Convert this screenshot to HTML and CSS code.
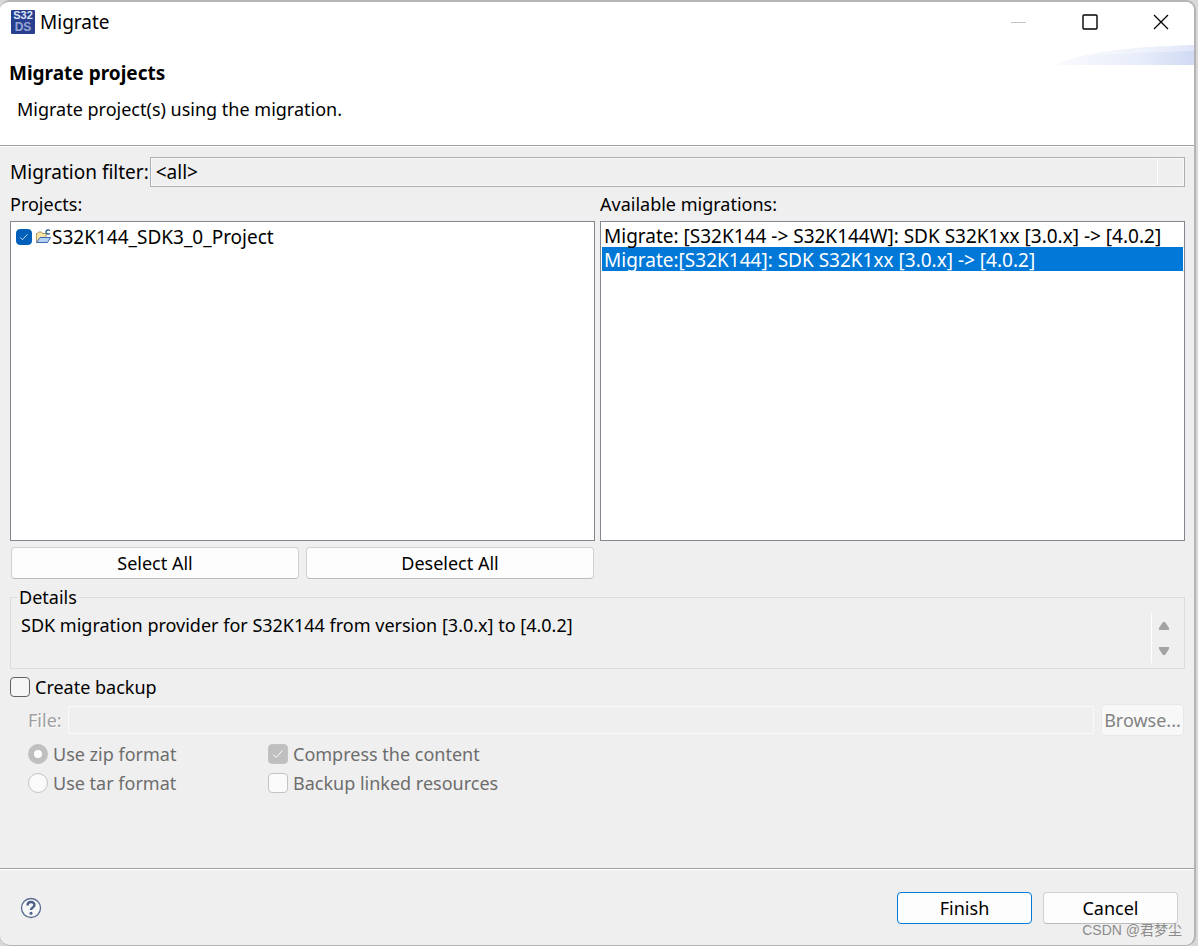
FILE: index.html
```html
<!doctype html>
<html lang="en">
<head>
	<meta charset="UTF-8">
	<meta name="viewport" content="width=device-width, initial-scale=1.0">
	<title>Migrate</title>
	<link rel="stylesheet" href="styles.css">
</head>
<body>
	<div class="window">
		<header class="header">
			<div class="titlebar">
				<svg class="logo" viewBox="0 0 24 24">
					<rect width="24" height="24" rx="1" fill="#283f8f"/>
					<text x="12" y="9" fill="#dfe5f7" text-anchor="middle">S32</text>
					<text class="ds" x="12" y="21" fill="#97a6d6" text-anchor="middle">DS</text>
				</svg>
				<span class="title">Migrate</span>
				<button class="win-btn" type="button" aria-label="Minimize" disabled>
					<svg viewBox="0 0 16 16"><path d="M0 8.5h15" stroke="#c4c4c4"/></svg>
				</button>
				<button class="win-btn" type="button" aria-label="Maximize">
					<svg viewBox="0 0 16 16"><rect x="1" y="1" width="14" height="14" rx="1" fill="none" stroke="#000" stroke-width="1.4"/></svg>
				</button>
				<button class="win-btn" type="button" aria-label="Close">
					<svg viewBox="0 0 16 16"><path d="M1 1l14 14M15 1L1 15" stroke="#000" stroke-width="1.3"/></svg>
				</button>
			</div>
			<div class="banner">
				<div>
					<h1>Migrate projects</h1>
					<p>Migrate project(s) using the migration.</p>
				</div>
				<svg class="swoosh" viewBox="0 0 140 20">
					<defs>
						<linearGradient id="swoosh">
							<stop offset="0" stop-color="#fafbfe"/>
							<stop offset=".6" stop-color="#e8edfa"/>
							<stop offset="1" stop-color="#d0daf4"/>
						</linearGradient>
					</defs>
					<path d="M0 20C25 8 75 2 140 0v20z" fill="url(#swoosh)"/>
					<path d="M30 11C60 5 100 1 140 0v6C100 7 60 9 30 11z" fill="#fff" opacity=".35"/>
				</svg>
			</div>
		</header>

		<main class="content">
			<div class="filter">
				<label for="filter">Migration filter:</label>
				<div class="combo">
					<select id="filter">
						<option>&lt;all&gt;</option>
					</select>
				</div>
			</div>

			<div class="lists">
				<section class="list">
					<h2>Projects:</h2>
					<div class="box">
						<label class="project">
							<input class="check small" type="checkbox" checked>
							<svg class="folder" viewBox="0 0 16 16">
								<path d="M1.5 13V4.500h1l1-1.500h3l1 1.500h3.500v4" fill="#f6e3a6" stroke="#b39a5c"/>
								<path d="M1.500 13.500L5 8.500h10.500l-3 5z" fill="#b4d3f4" stroke="#3f68b0"/>
								<path d="M15 1.500c-1.500-1-4-.8-4 1.500s2.500 2.500 4 1.500" fill="none" stroke="#275b91" stroke-width="1.400"/>
							</svg>
							<span>S32K144_SDK3_0_Project</span>
						</label>
					</div>
					<div class="list-actions">
						<button class="btn" type="button">Select All</button>
						<button class="btn" type="button">Deselect All</button>
					</div>
				</section>
				<section class="list">
					<h2><label for="migrations">Available migrations:</label></h2>
					<select class="box migrations" id="migrations" size="4">
						<option>Migrate: [S32K144 -&gt; S32K144W]: SDK S32K1xx [3.0.x] -&gt; [4.0.2]</option>
						<option selected>Migrate:[S32K144]: SDK S32K1xx [3.0.x] -&gt; [4.0.2]</option>
					</select>
				</section>
			</div>

			<fieldset class="details">
				<legend>Details</legend>
				<textarea aria-label="Details" rows="2" readonly>SDK migration provider for S32K144 from version [3.0.x] to [4.0.2]</textarea>
				<div class="scroll">
					<button type="button" aria-label="Scroll up" disabled>
						<svg viewBox="0 0 10 8"><path d="M4 0h2l4 6v2H0V6z"/></svg>
					</button>
					<button type="button" aria-label="Scroll down" disabled>
						<svg viewBox="0 0 10 8"><path d="M4 8h2l4-6V0H0v2z"/></svg>
					</button>
				</div>
			</fieldset>

			<label class="option"><input class="check" type="checkbox">Create backup</label>
			<div class="backup">
				<div class="file">
					<label for="file">File:</label>
					<input id="file" type="text" disabled>
					<button class="btn" type="button" disabled>Browse...</button>
				</div>
				<div class="formats">
					<label class="option"><input class="radio" type="radio" name="format" checked disabled>Use zip format</label>
					<label class="option"><input class="check" type="checkbox" checked disabled>Compress the content</label>
					<label class="option"><input class="radio" type="radio" name="format" disabled>Use tar format</label>
					<label class="option"><input class="check" type="checkbox" disabled>Backup linked resources</label>
				</div>
			</div>
		</main>

		<footer class="footer">
			<button class="help" type="button" aria-label="Help">
				<svg viewBox="0 0 22 22">
					<circle cx="11" cy="11" r="9.500" fill="#f6f7f9" stroke="#5a6c90" stroke-width="1.300"/>
					<path d="M7.500 8.500c0-4.500 7-4.500 7-.5 0 2.500-3.500 2.500-3.500 5" fill="none" stroke="#4c6089" stroke-width="2.400"/>
					<circle cx="11" cy="16.300" r="1.500" fill="#4c6089"/>
				</svg>
			</button>
			<button class="btn primary" type="button">Finish</button>
			<button class="btn" type="button">Cancel</button>
		</footer>
		<span class="watermark">CSDN @君梦尘</span>
	</div>
</body>
</html>
```
FILE: styles.css
```css
* {
	box-sizing: border-box;
}

body {
	margin: 0;
	background-color: #d8d8d8;
	color: #000;
	font: 400 18px/24px "Noto Sans", "Open Sans", "Noto Sans CJK SC", sans-serif;
}

h1, h2, p {
	margin: 0;
	font-size: 18px;
}

h2 {
	font-weight: 400;
}

button, input, select, textarea {
	margin: 0;
	color: inherit;
	font: inherit;
}

svg {
	display: block;
}

.window {
	position: relative;
	display: flex;
	flex-direction: column;
	overflow: hidden;
	min-height: 100vh;
	margin-right: 2px;
	border: solid #b4b4b4;
	border-width: 2px 2px 1px 0;
	border-radius: 10px;
	background-color: #efefef;
}

/* title and banner */
.header {
	height: 144px;
	border-bottom: 1px solid #a0a0a0;
	background-color: #fff;
}

.titlebar {
	display: flex;
	align-items: center;
	height: 40px;
	padding-left: 11px;
}

.logo {
	overflow: visible;
	width: 24px;
	height: 24px;
	font: 700 11px "Liberation Sans", sans-serif;
}

.logo .ds {
	font-size: 12px;
}

.title {
	flex: 1;
	margin-left: 5px;
	font-size: 19px;
}

.win-btn {
	width: 71px;
	height: 40px;
	padding: 0 25px 0 30px;
	border: 0;
	background: none;
}

.win-btn svg {
	width: 16px;
	height: 16px;
}

.banner {
	display: flex;
	justify-content: space-between;
	padding-left: 9px;
}

.banner h1 {
	padding-top: 19px;
	font-size: 19px;
}

.banner p {
	padding: 12px 0 0 8px;
}

.swoosh {
	width: 140px;
	height: 20px;
	margin-top: 3px;
}

/* content */
.content {
	flex: 1;
	padding: 10px 9px 0 10px;
	border-top: 1px solid #fff;
}

.filter {
	display: flex;
	align-items: center;
	gap: 1px;
	font-size: 19px;
}

.combo {
	position: relative;
	flex: 1;
}

.combo::after {
	position: absolute;
	top: 2px;
	right: 27px;
	bottom: 2px;
	border-left: 1px solid #fff;
	content: "";
}

.combo select {
	display: block;
	width: 100%;
	height: 30px;
	padding: 0 5px;
	border: 1px solid #adadb2;
	border-radius: 0;
	box-shadow: inset 0 0 0 1px #fafafa;
	background-color: #efefef;
	appearance: none;
}

.lists {
	display: flex;
	gap: 5px;
}

.list {
	flex: 1;
	min-width: 0;
}

.list h2 {
	height: 34px;
	padding-top: 5px;
}

.box {
	display: block;
	width: 100%;
	height: 320px;
	border: 1px solid #828790;
	border-radius: 0;
	background-color: #fff;
	font-size: 19px;
}

.project {
	display: flex;
	align-items: center;
	padding: 3px 5px;
}

.folder {
	width: 16px;
	height: 16px;
	margin: 0 1px 0 3px;
}

.migrations {
	padding: 1px;
	overflow: hidden;
	outline: 0;
	appearance: none;
}

.migrations option {
	height: 24px;
	min-height: 24px;
	padding: 0 2px;
	line-height: 24px;
}

.migrations option:checked {
	background: linear-gradient(#0078d7, #0078d7);
	color: #fff;
}

.list-actions {
	display: flex;
	gap: 7px;
	padding: 6px 1px 0;
}

.list-actions .btn {
	flex: 1;
}

.btn {
	height: 32px;
	padding: 0;
	border: 1px solid #d0d0d0;
	border-bottom-color: #bcbcbc;
	border-radius: 4px;
	background-color: #fdfdfd;
}

.btn:disabled {
	border-color: #e8e8e8;
	background-color: #f8f8f8;
	color: #838383;
}

.details {
	display: flex;
	min-width: 0;
	margin: 6px 0 0;
	padding: 4px 15px 5px 10px;
	border: 1px solid #dcdcdc;
}

.details legend {
	margin-left: -4px;
	padding: 0 2px;
}

.details textarea {
	flex: 1;
	height: 50px;
	padding: 0;
	border: 0;
	outline: 0;
	background: none;
	resize: none;
}

.scroll {
	display: flex;
	flex-direction: column;
	width: 18px;
	padding-left: 7px;
	border-left: 1px solid #fff;
}

.scroll button {
	flex: 1;
	padding: 0;
	border: 0;
	background: none;
}

.scroll svg {
	width: 10px;
	height: 8px;
	fill: #a3a3a3;
}

.option {
	display: flex;
	align-items: center;
	gap: 5px;
	height: 29px;
}

.details + .option {
	margin-top: 3px;
}

.check, .radio {
	flex: none;
	width: 20px;
	height: 20px;
	border: 1px solid #626262;
	border-radius: 4px;
	background-color: #f5f5f5;
	appearance: none;
}

.check:checked {
	border-color: #005fb8;
	background: #005fb8 url("data:image/svg+xml,%3Csvg xmlns='http://www.w3.org/2000/svg' viewBox='0 0 18 18'%3E%3Cpath d='M4 9.500l3 3 6.500-7' fill='none' stroke='%23fff'/%3E%3C/svg%3E") center no-repeat;
}

.check.small {
	width: 16px;
	height: 16px;
}

.radio {
	border-radius: 50%;
}

.check:disabled, .radio:disabled {
	border-color: #c3c3c3;
	background-color: #fafafa;
}

.check:checked:disabled {
	background-color: #bfbfbf;
}

.radio:checked:disabled {
	border: 6px solid #bfbfbf;
	background-color: #fff;
}

.backup {
	padding-left: 18px;
	color: #6d6d6d;
}

.file {
	display: flex;
	align-items: center;
	margin: 3px 1px 3px 0;
}

.file label {
	color: #a0a0a0;
	text-shadow: 1px 1px #fff;
}

.file input {
	flex: 1;
	min-width: 0;
	height: 28px;
	margin: 0 7px 0 6px;
	border: 1px solid #fafafa;
	background: none;
}

.file .btn {
	width: 83px;
}

.formats {
	display: grid;
	grid-template-columns: 240px 1fr;
}

/* footer */
.footer {
	display: flex;
	align-items: center;
	gap: 11px;
	height: 77px;
	padding: 1px 16px 0 20px;
	border-top: 1px solid #a0a0a0;
	box-shadow: inset 0 1px #fff;
}

.help {
	width: 22px;
	height: 22px;
	margin-right: auto;
	padding: 0;
	border: 0;
	background: none;
}

.footer .btn {
	width: 135px;
}

.footer .primary {
	border-color: #0078d4;
}

.watermark {
	position: absolute;
	right: 12px;
	bottom: 5px;
	color: #8c8c8c;
	font: 14px/20px "Liberation Sans", "Noto Sans CJK SC", sans-serif;
}
```
